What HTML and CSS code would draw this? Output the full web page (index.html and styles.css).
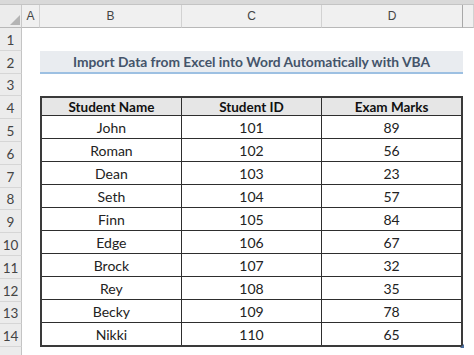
FILE: index.html
```html
<!DOCTYPE html>
<html lang="en">
<head>
    <meta charset="UTF-8">
    <meta name="viewport" content="width=device-width, initial-scale=1.0">
    <title>Import Data from Excel into Word Automatically with VBA</title>
    <link rel="stylesheet" href="styles.css">
</head>
<body>
    <div class="ribbon"></div>

    <div class="sheet">
        <!-- column letters -->
        <div class="corner">
            <svg width="22" height="23" viewBox="0 0 22 23">
                <polygon points="20,10 20,20 10,20" fill="#b4b4b4"/>
            </svg>
        </div>
        <div class="col-head">A</div>
        <div class="col-head">B</div>
        <div class="col-head">C</div>
        <div class="col-head">D</div>
        <div class="col-head"></div>

        <!-- row numbers -->
        <div class="row-head">1</div>
        <div class="row-head">2</div>
        <div class="row-head">3</div>
        <div class="row-head">4</div>
        <div class="row-head">5</div>
        <div class="row-head">6</div>
        <div class="row-head">7</div>
        <div class="row-head">8</div>
        <div class="row-head">9</div>
        <div class="row-head">10</div>
        <div class="row-head">11</div>
        <div class="row-head">12</div>
        <div class="row-head">13</div>
        <div class="row-head">14</div>
        <div class="row-head"></div>

        <div class="title">Import Data from Excel into Word Automatically with VBA</div>

        <div class="data">
            <table>
                <thead>
                    <tr>
                        <th>Student Name</th>
                        <th>Student ID</th>
                        <th>Exam Marks</th>
                    </tr>
                </thead>
                <tbody>
                    <tr><td>John</td><td>101</td><td>89</td></tr>
                    <tr><td>Roman</td><td>102</td><td>56</td></tr>
                    <tr><td>Dean</td><td>103</td><td>23</td></tr>
                    <tr><td>Seth</td><td>104</td><td>57</td></tr>
                    <tr><td>Finn</td><td>105</td><td>84</td></tr>
                    <tr><td>Edge</td><td>106</td><td>67</td></tr>
                    <tr><td>Brock</td><td>107</td><td>32</td></tr>
                    <tr><td>Rey</td><td>108</td><td>35</td></tr>
                    <tr><td>Becky</td><td>109</td><td>78</td></tr>
                    <tr><td>Nikki</td><td>110</td><td>65</td></tr>
                </tbody>
            </table>
            <div class="fill-handle"></div>
        </div>
    </div>
</body>
</html>
```

FILE: styles.css
```css
body {
    margin: 0;
    background: #fff;
    font-family: Lato, "Liberation Sans", sans-serif;
    color: #222;
    overflow: hidden;
}

/* grey strip above the column letters */
.ribbon {
    height: 4px;
    background: #d9d9d9;
    border-bottom: 1px solid #c4c4c4;
}

/* worksheet grid */
.sheet {
    display: grid;
    grid-template-columns: 22px 18px 142px 140px 141px 11px;
    grid-template-rows: 23px repeat(15, 22.8px);
}

.corner {
    background: #ececec;
    border-right: 1px solid #c9c9c9;
    border-bottom: 1px solid #b8b8b8;
    box-sizing: border-box;
}

.corner svg {
    display: block;
}

.col-head {
    background: #f0f0f0;
    border-right: 1px solid #d2d2d2;
    border-bottom: 1px solid #b8b8b8;
    box-sizing: border-box;
    display: flex;
    align-items: center;
    justify-content: center;
    font-family: "Liberation Sans", sans-serif;
    font-size: 12px;
    color: #444;
}

.col-head:nth-child(5) {
    border-right-color: #a8a8a8;
}

.row-head {
    grid-column: 1;
    background: #ececec;
    border-right: 1px solid #c4c4c4;
    border-bottom: 1px solid #d6d6d6;
    box-sizing: border-box;
    display: flex;
    align-items: center;
    justify-content: center;
    padding-top: 2px;
    font-size: 13.5px;
    color: #444;
}

/* title in row 2 */
.title {
    grid-row: 3;
    grid-column: 3 / 6;
    background: #e9ecf0;
    border-bottom: 2px solid #9dc0e2;
    display: flex;
    align-items: center;
    justify-content: center;
    font-size: 13.8px;
    font-weight: bold;
    color: #44546a;
    padding-top: 1px;
}

/* student table, rows 4 to 14 */
.data {
    grid-row: 5 / 16;
    grid-column: 3 / 6;
    position: relative;
}

.data table {
    width: 100%;
    height: 100%;
    border-collapse: collapse;
    table-layout: fixed;
    border: 2px solid #3a3a3a;
}

.data th,
.data td {
    border: 1px solid #2e2e2e;
    text-align: center;
    padding: 1px 0 0;
    font-size: 14px;
}

.data th {
    background: #e6e6e6;
    font-size: 13.5px;
    font-weight: bold;
    color: #111;
}

.data td {
    color: #222;
}

.fill-handle {
    position: absolute;
    right: -1px;
    bottom: -1px;
    width: 0;
    height: 0;
    border-left: 4px solid transparent;
    border-bottom: 4px solid #4a6fa0;
}
```
